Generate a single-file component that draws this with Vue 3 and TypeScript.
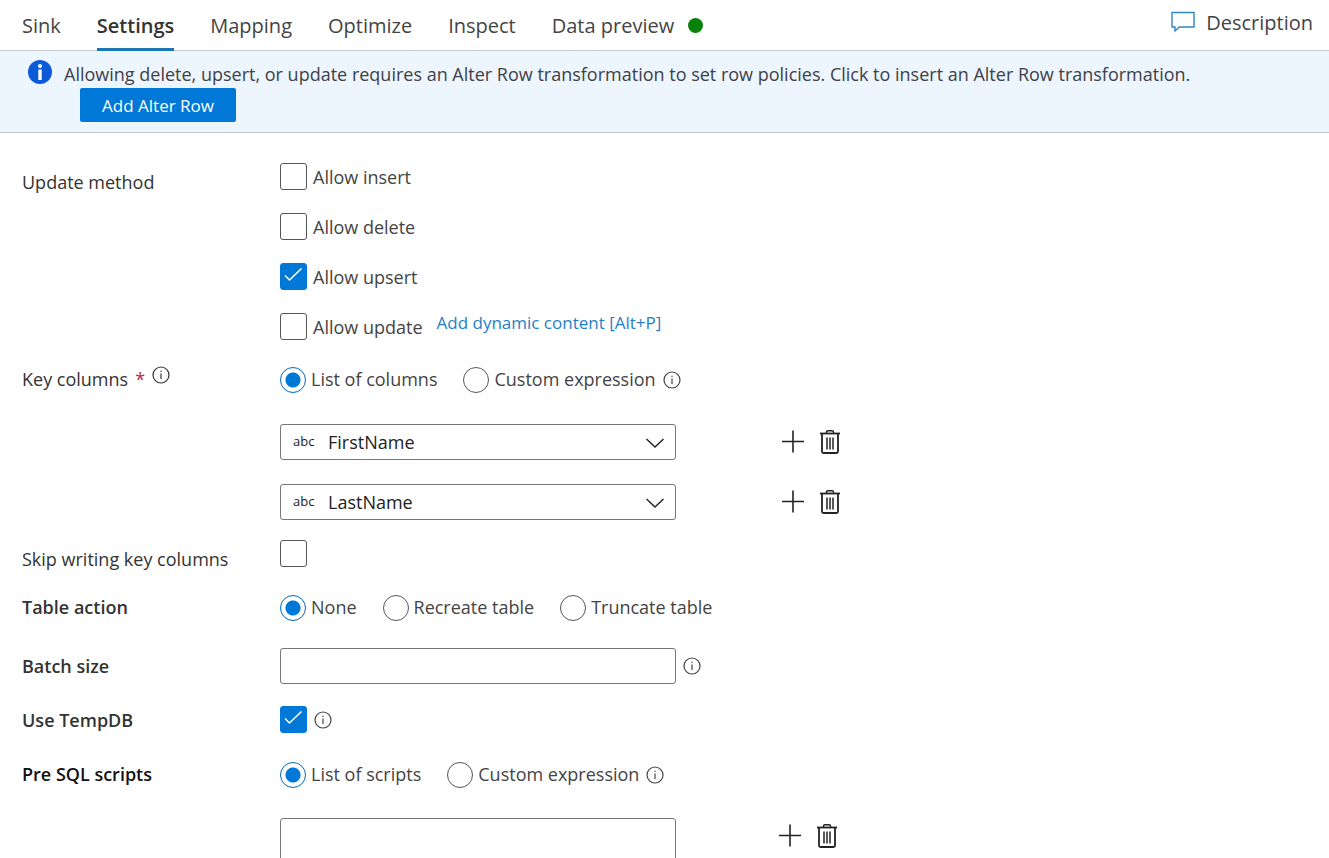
<script setup lang="ts">
import { ref, reactive, h, type FunctionalComponent } from 'vue'

interface Option {
  id: string
  label: string
}

const tabs = ['Sink', 'Settings', 'Mapping', 'Optimize', 'Inspect', 'Data preview']
const activeTab = ref('Settings')

const updateMethods = reactive([
  { id: 'insert', label: 'Allow insert', checked: false },
  { id: 'delete', label: 'Allow delete', checked: false },
  { id: 'upsert', label: 'Allow upsert', checked: true },
  { id: 'update', label: 'Allow update', checked: false },
])

const keyModes: Option[] = [
  { id: 'list', label: 'List of columns' },
  { id: 'custom', label: 'Custom expression' },
]
const tableActions: Option[] = [
  { id: 'none', label: 'None' },
  { id: 'recreate', label: 'Recreate table' },
  { id: 'truncate', label: 'Truncate table' },
]
const scriptModes: Option[] = [
  { id: 'list', label: 'List of scripts' },
  { id: 'custom', label: 'Custom expression' },
]

const columns = ['FirstName', 'LastName']
const keyColumns = ref(['FirstName', 'LastName'])
const keyMode = ref('list')
const tableAction = ref('none')
const scriptMode = ref('list')
const skipKeys = ref(false)
const useTempDb = ref(true)
const batchSize = ref('')
const preScript = ref('')

const svg = (size: number, width: number, children: ReturnType<typeof h>[]) =>
  h('svg', {
    width: size, height: size, viewBox: `0 0 ${size} ${size}`, fill: 'none',
    stroke: 'currentColor', 'stroke-width': width, 'aria-hidden': 'true',
  }, children)

const InfoIcon: FunctionalComponent = () => svg(18, 1.2, [
  h('circle', { cx: 9, cy: 9, r: 8 }),
  h('path', { d: 'M9 7.6v5.4M9 4.8v1.3' }),
])
const PlusIcon: FunctionalComponent = () => svg(24, 1.6, [
  h('path', { d: 'M1 11.500h22M12 0.500v22' }),
])
const TrashIcon: FunctionalComponent = () => svg(24, 1.6, [
  h('path', { d: 'M2 3.500h20', 'stroke-width': 1.8 }),
  h('path', { d: 'M8.5 3.500V2.2Q8.5 0.700 10 0.700h4q1.500 0 1.500 1.400V3.500', 'stroke-width': 1.4 }),
  h('path', { d: 'M4 3.500v18q0 1.500 1.500 1.500h13q1.500 0 1.500-1.500V3.500', 'stroke-width': 1.8 }),
  h('path', { d: 'M9 7.500v12M12 7.500v12M15 7.500v12', 'stroke-width': 1.5 }),
])
const CheckIcon: FunctionalComponent = () => svg(27, 1.6, [
  h('path', { d: 'M5 12.500l4.500 4.500L21.500 5.500' }),
])
</script>

<template>
  <main class="panel">
    <header class="tabbar">
      <nav class="tabs" role="tablist">
        <button
          v-for="tab in tabs"
          :key="tab"
          type="button"
          role="tab"
          class="tab"
          :class="{ active: tab === activeTab }"
          :aria-selected="tab === activeTab"
          @click="activeTab = tab"
        >{{ tab }}</button>
        <span class="status"></span>
      </nav>
      <button type="button" class="description">
        <svg class="bubble" width="24" height="22" viewBox="0 0 24 22" fill="none" stroke="currentColor" stroke-width="1.4" aria-hidden="true">
          <path d="M1 1.500h22v14.500H8.500l-4.500 4V16H1z" />
        </svg>
        Description
      </button>
    </header>

    <section class="banner">
      <svg class="banner-icon" width="24" height="24" viewBox="0 0 24 24" aria-hidden="true">
        <circle cx="12" cy="12" r="12" fill="#0b5bd7" />
        <circle cx="12" cy="6" r="2" fill="#fff" />
        <path d="M10.300 9.500h3.400V20h-3.400z" fill="#fff" />
      </svg>
      <div class="banner-body">
        <p>Allowing delete, upsert, or update requires an Alter Row transformation to set row policies. Click to insert an Alter Row transformation.</p>
        <button type="button" class="primary">Add Alter Row</button>
      </div>
    </section>

    <form class="form" @submit.prevent>
      <div class="row update" role="group" aria-labelledby="update-label">
        <span id="update-label" class="name low">Update method</span>
        <div class="checks">
          <div v-for="m in updateMethods" :key="m.id" class="line">
            <label class="choice check">
              <span class="box"><input v-model="m.checked" type="checkbox" /><CheckIcon v-if="m.checked" /></span>
              <span class="caption">{{ m.label }}</span>
            </label>
            <a v-if="m.id === 'update'" href="#" class="dynamic">Add dynamic content [Alt+P]</a>
          </div>
        </div>
      </div>

      <div class="row key-mode" role="radiogroup" aria-labelledby="key-label">
        <span id="key-label" class="name">Key columns <span class="required">*</span><InfoIcon /></span>
        <div class="line">
          <label v-for="o in keyModes" :key="o.id" class="choice radio">
            <input v-model="keyMode" type="radio" name="key-mode" :value="o.id" />{{ o.label }}
          </label>
          <InfoIcon class="hint" />
        </div>
      </div>

      <div class="row key-list">
        <div class="entries">
          <div v-for="(_, i) in keyColumns" :key="i" class="entry">
            <div class="picker">
              <span class="kind">abc</span>
              <select v-model="keyColumns[i]" class="field" :aria-label="`Key column ${i + 1}`">
                <option v-for="c in columns" :key="c">{{ c }}</option>
              </select>
              <svg class="chevron" width="20" height="12" viewBox="0 0 20 12" fill="none" stroke="currentColor" stroke-width="1.4" aria-hidden="true">
                <path d="M1.500 2l8.500 8 8.500-8" />
              </svg>
            </div>
            <div class="actions">
              <button type="button" class="icon" aria-label="Add key column"><PlusIcon /></button>
              <button type="button" class="icon" aria-label="Delete key column"><TrashIcon /></button>
            </div>
          </div>
        </div>
      </div>

      <div class="row skip">
        <label for="skip" class="name low">Skip writing key columns</label>
        <span class="box"><input id="skip" v-model="skipKeys" type="checkbox" /><CheckIcon v-if="skipKeys" /></span>
      </div>

      <div class="row" role="radiogroup" aria-labelledby="action-label">
        <span id="action-label" class="name strong">Table action</span>
        <div class="line">
          <label v-for="o in tableActions" :key="o.id" class="choice radio">
            <input v-model="tableAction" type="radio" name="table-action" :value="o.id" />{{ o.label }}
          </label>
        </div>
      </div>

      <div class="row batch">
        <label for="batch" class="name strong tall">Batch size</label>
        <div class="line">
          <input id="batch" v-model="batchSize" type="text" class="field" />
          <InfoIcon class="hint" />
        </div>
      </div>

      <div class="row tempdb">
        <label for="tempdb" class="name strong caption">Use TempDB</label>
        <div class="line">
          <span class="box"><input id="tempdb" v-model="useTempDb" type="checkbox" /><CheckIcon v-if="useTempDb" /></span>
          <InfoIcon class="hint" />
        </div>
      </div>

      <div class="row" role="radiogroup" aria-labelledby="pre-label">
        <span id="pre-label" class="name strong dark">Pre SQL scripts</span>
        <div class="line">
          <label v-for="o in scriptModes" :key="o.id" class="choice radio">
            <input v-model="scriptMode" type="radio" name="script-mode" :value="o.id" />{{ o.label }}
          </label>
          <InfoIcon class="hint" />
        </div>
      </div>

      <div class="row script">
        <div class="entry">
          <textarea v-model="preScript" class="field area" aria-label="Pre SQL script"></textarea>
          <div class="actions near">
            <button type="button" class="icon" aria-label="Add script"><PlusIcon /></button>
            <button type="button" class="icon" aria-label="Delete script"><TrashIcon /></button>
          </div>
        </div>
      </div>
    </form>
  </main>
</template>

<style>
body {
  margin: 0;
  background: #fff;
}
</style>

<style scoped>
.panel {
  height: 100vh;
  overflow: hidden;
  font-family: "Open Sans", "Noto Sans", sans-serif;
  font-size: 18px;
  line-height: 27px;
  color: #444;
}
button,
input,
select,
textarea {
  font: inherit;
  color: inherit;
  margin: 0;
  box-sizing: border-box;
}
svg {
  display: block;
  flex: none;
}
button {
  padding: 0;
  border: 0;
  background: none;
  cursor: pointer;
}
.tabbar {
  display: flex;
  justify-content: space-between;
  height: 50px;
  padding: 0 16px 0 22px;
  border-bottom: 1px solid #c8ccd2;
  font-size: 20px;
}
.tabs {
  display: flex;
  align-items: center;
  gap: 36px;
}
.tab {
  height: 51px;
  border-bottom: 3px solid transparent;
  padding-top: 3px;
  align-self: flex-start;
}
.tab.active {
  border-bottom-color: #1b76b4;
  font-weight: 600;
  color: #333;
}
.status {
  width: 15px;
  height: 15px;
  margin-left: -22px;
  border-radius: 50%;
  background: #0a820a;
}
.description {
  display: flex;
  align-items: center;
  gap: 11px;
  height: 44px;
}
.bubble {
  color: #2e86c4;
}
.banner {
  display: flex;
  gap: 12px;
  padding: 9px 28px;
  border-bottom: 1px solid #c4c7cb;
  background: #edf5ff;
}
.banner p {
  margin: 0;
  line-height: 28px;
  color: #3d4147;
}
.banner-body {
  min-height: 63px;
}
.primary {
  display: block;
  min-width: 156px;
  height: 34px;
  margin: 0 16px;
  border-radius: 2px;
  background: #0078d7;
  color: #fff;
  font-size: 17px;
}
.form {
  padding: 30px 22px 0;
}
.row {
  display: grid;
  grid-template-columns: 258px minmax(0, 1fr);
  align-items: start;
  margin-bottom: 27px;
}
.update {
  margin-bottom: 26px;
}
.name {
  display: flex;
  color: #333;
}
.low {
  padding-top: 6px;
}
.strong {
  font-weight: 600;
}
.dark {
  color: #111;
}
.tall {
  line-height: 36px;
}
.caption {
  padding-top: 2px;
  line-height: 25px;
}
.required {
  margin: 0 7px;
  color: #b8283c;
}
.checks {
  display: grid;
  gap: 23px;
}
.line {
  display: flex;
  align-items: center;
}
.choice {
  display: flex;
  align-items: center;
}
.check {
  gap: 6px;
}
.radio {
  gap: 5px;
}
.radio + .radio {
  margin-left: 26px;
}
.box {
  position: relative;
  width: 27px;
  height: 27px;
  color: #fff;
}
.box svg {
  position: absolute;
  inset: 0;
  pointer-events: none;
}
input[type="checkbox"],
input[type="radio"] {
  appearance: none;
  display: block;
  flex: none;
  width: 27px;
  height: 27px;
  border: 1px solid #555;
  border-radius: 3px;
  background: #fff;
}
input[type="checkbox"]:checked {
  border-color: #0078d7;
  background: #0078d7;
}
input[type="radio"] {
  width: 26px;
  height: 26px;
  border-radius: 50%;
}
input[type="radio"]:checked {
  border-color: #0068b8;
  background: radial-gradient(circle, #0078d7 7px, #fff 8px);
}
.dynamic {
  margin-left: 14px;
  padding-bottom: 8px;
  line-height: 19px;
  font-size: 17px;
  color: #1f80c8;
  text-decoration: none;
}
.hint {
  margin-left: 7px;
}
.key-mode {
  margin-bottom: 31px;
}
.key-list {
  margin-bottom: 20px;
}
.skip {
  margin-bottom: 21px;
}
.entries {
  display: grid;
  gap: 24px;
}
.key-list .entries,
.script .entry {
  grid-column: 2;
}
.entry {
  display: flex;
}
.picker {
  position: relative;
  width: 100%;
  max-width: 396px;
  color: #222;
}
.field {
  display: block;
  width: 100%;
  max-width: 396px;
  height: 36px;
  padding: 0 8px;
  border: 1px solid #777;
  border-radius: 3px;
  background: #fff;
}
.picker .field {
  appearance: none;
  padding: 0 40px 0 47px;
}
.kind {
  position: absolute;
  left: 13px;
  top: 4px;
  font-size: 13px;
}
.chevron {
  position: absolute;
  right: 11px;
  top: 13px;
  pointer-events: none;
}
.actions {
  display: flex;
  align-items: center;
  gap: 13px;
  height: 36px;
  margin-left: 105px;
  color: #222;
}
.near {
  margin-left: 102px;
}
.batch {
  margin-bottom: 22px;
}
.tempdb {
  margin-bottom: 28px;
}
.script {
  margin: 30px 0 0;
}
.area {
  height: 96px;
  resize: none;
}
</style>
